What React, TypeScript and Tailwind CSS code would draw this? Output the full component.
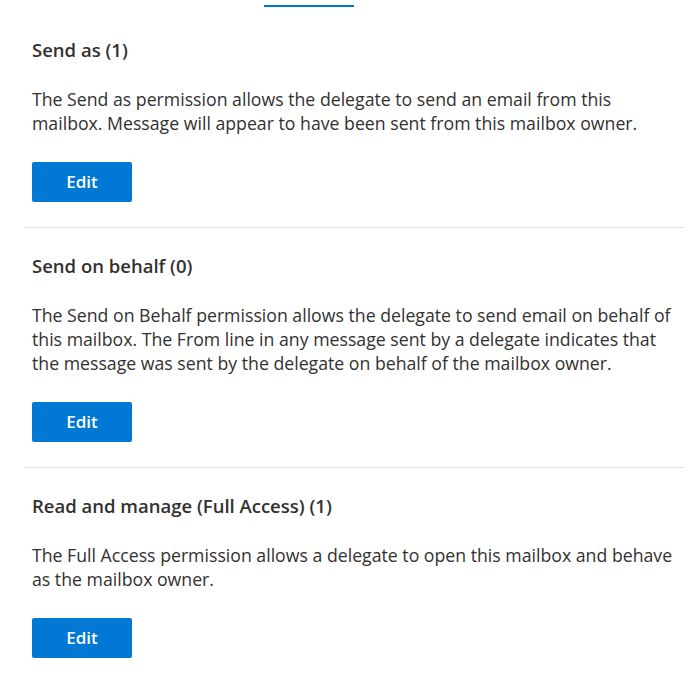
import React from 'react';

const sections = [
    {
        title: 'Send as (1)',
        lines: [
            'The Send as permission allows the delegate to send an email from this',
            'mailbox. Message will appear to have been sent from this mailbox owner.',
        ],
    },
    {
        title: 'Send on behalf (0)',
        lines: [
            'The Send on Behalf permission allows the delegate to send email on behalf of',
            'this mailbox. The From line in any message sent by a delegate indicates that',
            'the message was sent by the delegate on behalf of the mailbox owner.',
        ],
    },
    {
        title: 'Read and manage (Full Access) (1)',
        lines: [
            'The Full Access permission allows a delegate to open this mailbox and behave',
            'as the mailbox owner.',
        ],
    },
];

export default function App() {
    return (
        <div className="w-[700px] h-[676px] bg-white overflow-hidden text-[#323130] font-['Segoe_UI','Open_Sans',sans-serif]">
            {/* tab strip */}
            <div className="h-[12px] pt-[5px] pl-[264px]">
                <div className="w-[90px] h-[2px] bg-[#0078d4]"></div>
            </div>

            <div className="w-[660px] ml-[24px]">
                {sections.map((s, idx) => (
                    <div key={idx} className={`flex flex-col items-start pl-[8px] pt-[25px] pb-[25px] ${idx < sections.length - 1 ? 'border-b border-[#e1dfdd]' : ''}`}>
                        <h2 className="text-[18.5px] leading-[25px] font-semibold mb-[25px]">{s.title}</h2>
                        <p className="text-[17.7px] leading-[24px] whitespace-nowrap mb-[27px]">
                            {s.lines.map((l, i) => (
                                <React.Fragment key={i}>
                                    {l}
                                    {i < s.lines.length - 1 && <br />}
                                </React.Fragment>
                            ))}
                        </p>
                        <button className="w-[100px] h-[40px] rounded-[2px] bg-[#0078d4] text-white text-[17px] font-semibold">
                            Edit
                        </button>
                    </div>
                ))}
            </div>
        </div>
    );
}
